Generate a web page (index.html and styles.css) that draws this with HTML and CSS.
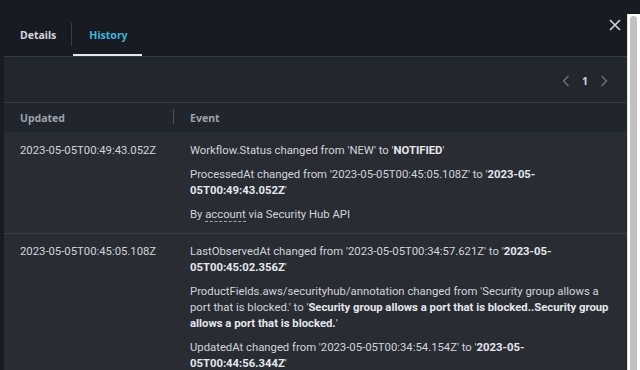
FILE: index.html
```html
<!DOCTYPE html>
<html>
<head>
<meta charset="utf-8">
<link rel="stylesheet" href="styles.css">
</head>
<body>
<div class="page">
  <div class="panel">
    <div class="tabbar">
      <div class="tab">Details</div>
      <div class="tab-sep"></div>
      <div class="tab active">History</div>
      <button class="close" aria-label="Close">
        <svg width="12" height="12" viewBox="0 0 12 12"><path d="M1 1L11 11M11 1L1 11" stroke="#d1d5db" stroke-width="1.6" fill="none"/></svg>
      </button>
    </div>
    <div class="content">
      <div class="pager">
        <svg class="chev" width="8" height="12" viewBox="0 0 8 12"><path d="M6.5 1L1.5 6L6.5 11" stroke="#6b7280" stroke-width="1.4" fill="none"/></svg>
        <span class="pagenum">1</span>
        <svg class="chev" width="8" height="12" viewBox="0 0 8 12"><path d="M1.5 1L6.5 6L1.5 11" stroke="#6b7280" stroke-width="1.4" fill="none"/></svg>
      </div>
      <div class="thead">
        <div class="th col-date">Updated</div>
        <div class="th col-event"><span class="th-sep"></span>Event</div>
      </div>
      <div class="row">
        <div class="col-date cell">2023-05-05T00:49:43.052Z</div>
        <div class="col-event cell">
          <p>Workflow.Status changed from 'NEW' to '<b>NOTIFIED</b>'</p>
          <p>ProcessedAt changed from '2023-05-05T00:45:05.108Z' to '<b>2023-05-05T00:49:43.052Z</b>'</p>
          <p>By <span class="dashed">account</span> via Security Hub API</p>
        </div>
      </div>
      <div class="row">
        <div class="col-date cell">2023-05-05T00:45:05.108Z</div>
        <div class="col-event cell">
          <p>LastObservedAt changed from '2023-05-05T00:34:57.621Z' to '<b>2023-05-05T00:45:02.356Z</b>'</p>
          <p>ProductFields.aws/securityhub/annotation changed from 'Security group allows a port that is blocked.' to '<b>Security group allows a port that is blocked..Security group allows a port that is blocked.</b>'</p>
          <p>UpdatedAt changed from '2023-05-05T00:34:54.154Z' to '<b>2023-05-05T00:44:56.344Z</b>'</p>
        </div>
      </div>
    </div>
  </div>
  <div class="scrollbar"><div class="thumb"></div></div>
</div>
</body>
</html>
```
FILE: styles.css
```css
* { box-sizing: border-box; }
html, body { margin: 0; padding: 0; }
body {
  background: #181b22;
  font-family: "Noto Sans", "Open Sans", sans-serif;
  font-size: 11px;
  color: #d1d5db;
  width: 640px;
  height: 370px;
  overflow: hidden;
}
.page { display: flex; height: 370px; }
.panel { flex: 1; display: flex; flex-direction: column; min-width: 0; }
.tabbar {
  height: 56px;
  flex-shrink: 0;
  display: flex;
  align-items: flex-end;
  position: relative;
  padding-left: 4px;
}
.tab {
  height: 33px;
  padding: 5px 15px 0 16px;
  font-weight: 700;
  font-size: 10.5px;
  color: #d1d5db;
}
.tab.active {
  color: #3fb6d6;
  border-bottom: 2px solid #e6e8eb;
  margin-left: 1px;
  padding: 5px 14px 0 16px;
}
.tab-sep { width: 1px; height: 23px; background: #3a3f47; margin-bottom: 10px; }
.close {
  position: absolute;
  right: 6px;
  top: 19px;
  background: none;
  border: 0;
  padding: 0;
  width: 12px;
  height: 12px;
  display: flex;
}
.content {
  flex: 1;
  margin-left: 4px;
  background: #22262d;
  border-top: 1px solid #363a42;
}
.pager {
  height: 45px;
  display: flex;
  align-items: center;
  justify-content: flex-end;
  gap: 12px;
  padding-right: 19px;
  padding-top: 3px;
}
.pagenum { font-weight: 700; font-size: 10.5px; color: #d1d5db; }
.thead {
  display: flex;
  height: 31px;
  align-items: center;
  border-top: 1px solid #363a42;
  background: #21252c;
  border-bottom: 1px solid #2a2e35;
}
.th { font-weight: 700; color: #9ba3ae; font-size: 10.5px; }
.col-date { width: 169px; padding-left: 16px; flex-shrink: 0; }
.col-event {
  flex: 1;
  padding-left: 17px;
  padding-right: 11px;
  position: relative;
}
.cell {
  font-family: Roboto, "Noto Sans", sans-serif;
  font-size: 11.3px;
}
.th-sep { position: absolute; left: 0; top: -2px; width: 1px; height: 15px; background: #4b5059; }
.row {
  display: flex;
  background: #292c33;
  border-bottom: 1px solid #3a3e46;
  padding: 10px 0 10px;
  line-height: 16px;
}
.cell p { margin: 0 0 8px; }
.cell p:last-child { margin-bottom: 0; }
.cell b { font-weight: 700; color: #e4e7eb; }
.dashed { border-bottom: 1px dashed #9ba3ae; }
.scrollbar {
  width: 13px;
  margin-top: 14px;
  background: #ffffff;
  padding: 2px 3px 0 2px;
  border-left: 1px solid #e0e0e0;
}
.thumb { background: #c1c1c1; height: 100%; border-radius: 4px 4px 0 0; }
```
